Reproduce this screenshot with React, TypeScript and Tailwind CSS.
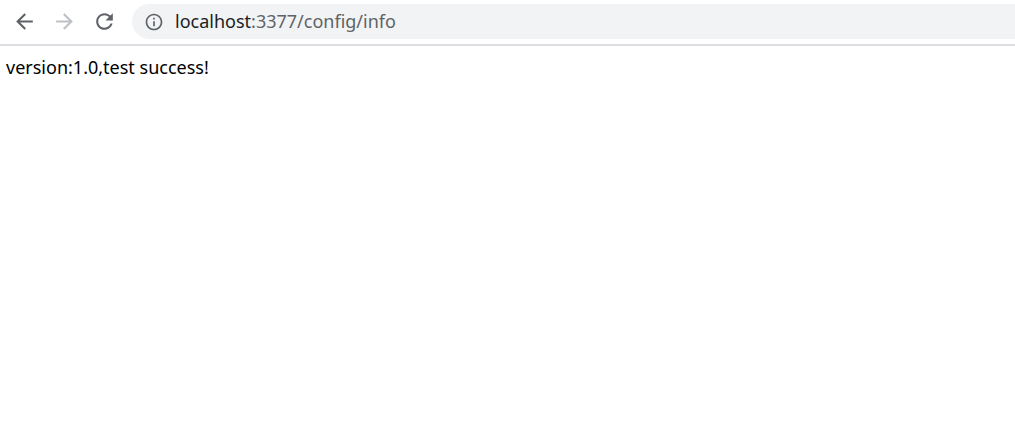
const backPath = "M20 11H7.83l5.59-5.59L12 4l-8 8 8 8 1.41-1.41L7.83 13H20v-2z";
const forwardPath = "M4 11h12.17l-5.59-5.59L12 4l8 8-8 8-1.41-1.41L16.17 13H4v-2z";
const reloadPath =
  "M17.65 6.35C16.2 4.9 14.21 4 12 4c-4.42 0-7.99 3.58-7.99 8s3.57 8 7.99 8c3.73 0 6.84-2.55 7.73-6h-2.08c-.82 2.33-3.04 4-5.65 4-3.31 0-6-2.69-6-6s2.69-6 6-6c1.66 0 3.14.69 4.22 1.78L13 11h7V4l-2.35 2.35z";
const infoPath =
  "M11 7h2v2h-2zm0 4h2v6h-2zm1-9C6.48 2 2 6.48 2 12s4.48 10 10 10 10-4.48 10-10S17.52 2 12 2zm0 18c-4.41 0-8-3.59-8-8s3.59-8 8-8 8 3.59 8 8-3.59 8-8 8z";

const Icon = ({ d, className }: { d: string; className: string }) => (
  <svg viewBox="0 0 24 24" fill="currentColor" className={className}>
    <path d={d} />
  </svg>
);

export default function App() {
  return (
    <div className="min-h-[442px] bg-white font-['Noto_Sans',sans-serif]">
      {/* browser toolbar */}
      <div className="flex h-[46px] items-start border-b-2 border-[#dcdce1] pt-1">
        <div className="flex h-[35px] w-[132px] items-center gap-[15px] pl-3">
          <Icon d={backPath} className="h-[25px] w-[25px] text-[#5f6368]" />
          <Icon d={forwardPath} className="h-[25px] w-[25px] text-[#bdc1c6]" />
          <Icon d={reloadPath} className="h-[25px] w-[25px] text-[#5f6368]" />
        </div>
        <div className="flex h-[35px] flex-1 items-center rounded-l-[18px] bg-[#f1f3f4] pl-3">
          <Icon d={infoPath} className="h-5 w-5 text-[#5f6368]" />
          <div className="ml-[11px] text-[18px] leading-[35px] text-[#5f6368]">
            <span className="text-[#202124]">localhost</span>:3377/config/info
          </div>
        </div>
      </div>
      <p className="pl-[6px] pt-[8px] text-[18px] leading-[26px] text-black">version:1.0,test success!</p>
    </div>
  );
}
